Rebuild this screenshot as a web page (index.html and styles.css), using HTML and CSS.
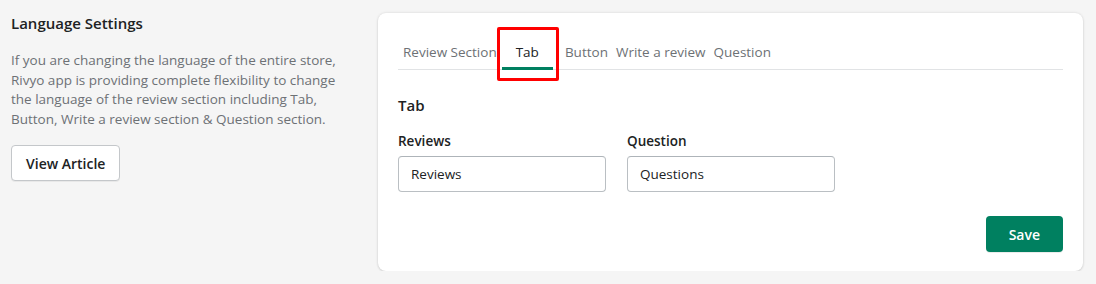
FILE: index.html
```html
<!DOCTYPE html>
<html>
  <head>
    <meta charset="utf-8" />
    <title>Language Settings</title>
    <link rel="stylesheet" href="styles.css">
  </head>
  <body>
    <div id="page">
      <div id="about">
        <h2>Language Settings</h2>
        <p>If you are changing the language of the entire store,<br>
          Rivyo app is providing complete flexibility to change<br>
          the language of the review section including Tab,<br>
          Button, Write a review section &amp; Question section.</p>
        <button class="plain">View Article</button>
      </div>
      <div id="card">
        <div class="tabs">
          <span class="tab first">Review Section</span>
          <span class="tab selected">Tab</span>
          <span class="tab">Button</span>
          <span class="tab">Write a review</span>
          <span class="tab">Question</span>
        </div>
        <h3>Tab</h3>
        <div class="fields">
          <label class="field">
            <span>Reviews</span>
            <input type="text" value="Reviews"/>
          </label>
          <label class="field">
            <span>Question</span>
            <input type="text" value="Questions"/>
          </label>
        </div>
        <div class="actions">
          <button class="primary">Save</button>
        </div>
      </div>
    </div>
  </body>
</html>
```

FILE: styles.css
```css
*{
  box-sizing: border-box;
  font-family: "Open Sans", "Noto Sans", sans-serif;
}
body{
  margin: 0;
  background-color: #f5f5f5;
  color: #202223;
}
#page{
  display: flex;
  align-items: flex-start;
  padding: 0 13px 0 11px;
}
#about{
  width: 367px;
}
#about h2{
  margin: 11px 0 0;
  font-size: 15px;
  line-height: 24px;
  font-weight: 600;
}
#about p{
  margin: 16px 0 16px;
  font-size: 13.5px;
  line-height: 19.6px;
  color: #6d7175;
}
button{
  font-size: 14px;
  font-weight: 600;
  border-radius: 4px;
  cursor: pointer;
}
.plain{
  height: 36px;
  padding: 0 14px;
  background-color: white;
  color: #202223;
  border: 1px solid #c4c7ca;
  box-shadow: 0 1px 0 rgba(0, 0, 0, 0.05);
}
#card{
  flex: 1;
  margin-top: 13px;
  background-color: white;
  border-radius: 8px;
  box-shadow: 0 0 3px rgba(0, 0, 0, 0.12), 0 1px 2px rgba(0, 0, 0, 0.1);
  padding: 21px 20px 19px 20px;
}
.tabs{
  display: flex;
  gap: 2px;
  border-bottom: 1px solid #e1e3e5;
}
.tab{
  position: relative;
  height: 36px;
  line-height: 36px;
  padding: 0 3px;
  font-size: 13.5px;
  color: #6d7175;
  border-bottom: 3px solid transparent;
  margin-bottom: -1px;
  cursor: pointer;
}
.tab.first{
  padding-left: 5px;
}
.tab.selected{
  min-width: 50px;
  padding: 0 14px;
  text-align: center;
  color: #202223;
  border-bottom-color: #008060;
  margin-right: 7px;
}
.tab.selected::before{
  content: "";
  position: absolute;
  left: -5px;
  right: -6px;
  top: -7px;
  bottom: -14px;
  border: 3px solid #ff0000;
  border-radius: 2px;
}
h3{
  margin: 25px 0 0;
  font-size: 15px;
  line-height: 20px;
  font-weight: 600;
}
.fields{
  display: flex;
  gap: 21px;
  margin-top: 16px;
}
.field{
  display: flex;
  flex-direction: column;
  gap: 5px;
  width: 208px;
}
.field span{
  font-size: 13.5px;
  line-height: 20px;
  font-weight: 600;
}
.field input{
  height: 36px;
  padding: 0 12px;
  font-size: 13.5px;
  color: #202223;
  border: 1px solid #babfc3;
  border-top-color: #aeb4b9;
  border-radius: 4px;
}
.actions{
  display: flex;
  justify-content: flex-end;
  margin-top: 24px;
}
.primary{
  height: 36px;
  padding: 0 23px;
  background-color: #008060;
  color: white;
  border: none;
  box-shadow: 0 1px 0 rgba(0, 0, 0, 0.08);
}
```
